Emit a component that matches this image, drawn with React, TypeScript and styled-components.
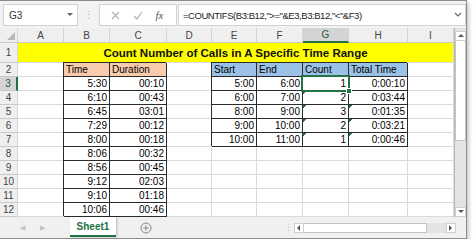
import React from "react";
import styled, { createGlobalStyle, css } from "styled-components";

const GlobalStyle = createGlobalStyle`
  html, body { margin: 0; padding: 0; background: #fff; }
  body { font-family: "Liberation Sans", Arial, sans-serif; color: #000; }
`;

const COLS = [18, 46, 46, 57, 45, 45, 46, 46, 59, 46];
const LETTERS = ["A", "B", "C", "D", "E", "F", "G", "H", "I"];
const GREEN = "#217346";
const LINE = "#dadada";
const DARK = "#2b2b2b";

const ROWS: string[][] = [
  ["", "Time", "Duration", "", "Start", "End", "Count", "Total Time", ""],
  ["", "5:30", "00:10", "", "5:00", "6:00", "1", "0:00:10", ""],
  ["", "6:10", "00:43", "", "6:00", "7:00", "2", "0:03:44", ""],
  ["", "6:45", "03:01", "", "8:00", "9:00", "3", "0:01:35", ""],
  ["", "7:29", "00:12", "", "9:00", "10:00", "2", "0:03:21", ""],
  ["", "8:00", "00:18", "", "10:00", "11:00", "1", "0:00:46", ""],
  ["", "8:06", "00:32", "", "", "", "", "", ""],
  ["", "8:56", "00:45", "", "", "", "", "", ""],
  ["", "9:12", "02:03", "", "", "", "", "", ""],
  ["", "9:10", "01:18", "", "", "", "", "", ""],
  ["", "10:06", "00:46", "", "", "", "", "", ""],
];

const Window = styled.div`
  width: 466px;
  border-top: 1px solid #8c8c8c;
  border-right: 1px solid #8c8c8c;
  border-bottom: 1px solid #8c8c8c;
  box-shadow: 2px 3px 4px rgba(0, 0, 0, 0.22);
  background: #f3f3f3;
  display: flex;
  flex-direction: column;
`;

/* ---------- formula bar ---------- */

const FormulaBar = styled.div`
  height: 27px;
  box-sizing: border-box;
  padding: 3px 0 2px 3px;
  display: flex;
  align-items: stretch;
  background: #f3f3f3;
`;

const Box = styled.div<{ $w?: number }>`
  box-sizing: border-box;
  background: #fff;
  border: 1px solid #d2d2d2;
  display: flex;
  align-items: center;
  ${(p) => (p.$w ? css`width: ${p.$w}px;` : css`flex: 1;`)}
`;

const NameText = styled.span`
  font-size: 10px;
  color: #333;
  padding-left: 5px;
  flex: 1;
`;

const Dots = styled.div`
  width: 21px;
  display: flex;
  align-items: center;
  justify-content: center;
  color: #b4b4b4;
  font-size: 11px;
`;

const FuncButtons = styled(Box)`
  justify-content: space-around;
  padding: 0 6px 0 4px;
  margin-right: 1px;
`;

const Fx = styled.span`
  font-family: "Liberation Serif", serif;
  font-style: italic;
  font-size: 11px;
  color: #555;
`;

const FormulaText = styled.span`
  flex: 1;
  font-size: 9.5px;
  letter-spacing: -0.45px;
  color: #222;
  padding-left: 4px;
  white-space: nowrap;
`;

/* ---------- sheet grid ---------- */

const Body = styled.div`
  display: flex;
`;

const Grid = styled.div`
  display: grid;
  grid-template-columns: ${COLS.map((c) => `${c}px`).join(" ")};
  grid-template-rows: 15px 20px repeat(11, 14px);
  background: #fff;
`;

const Head = styled.div<{ $sel?: boolean; $side?: boolean }>`
  box-sizing: border-box;
  background: ${(p) => (p.$sel ? "#d4d4d4" : "#efefef")};
  border-right: ${(p) => (p.$side && p.$sel ? `2px solid ${GREEN}` : "1px solid #d4d4d4")};
  border-bottom: ${(p) => (!p.$side && p.$sel ? `2px solid ${GREEN}` : "1px solid #c9c9c9")};
  font-size: 10px;
  color: ${(p) => (p.$sel ? "#1f5c38" : "#444")};
  display: flex;
  align-items: center;
  justify-content: center;
`;

const Corner = styled(Head)`
  align-items: flex-end;
  justify-content: flex-end;
  padding: 0 2px 2px 0;
`;

const Cell = styled.div<{
  $fill?: string;
  $align?: "left" | "right";
  $box?: boolean;
  $err?: boolean;
  $sel?: boolean;
}>`
  box-sizing: border-box;
  border-right: 1px solid ${(p) => (p.$box ? DARK : LINE)};
  border-bottom: 1px solid ${(p) => (p.$box ? DARK : LINE)};
  background: ${(p) =>
    p.$err
      ? `linear-gradient(135deg, ${GREEN} 50%, transparent 50%) 0 0 / 4px 4px no-repeat, ${p.$fill ?? "#fff"}`
      : p.$fill ?? "#fff"};
  ${(p) => p.$box && css`box-shadow: -1px -1px 0 ${DARK};`}
  font-size: 10px;
  line-height: 13px;
  text-align: ${(p) => p.$align ?? "right"};
  padding: 0 2px 0 2px;
  white-space: nowrap;
  overflow: visible;
  ${(p) =>
    p.$sel &&
    css`
      position: relative;
      &::after {
        content: "";
        position: absolute;
        left: -2px;
        top: -2px;
        right: -2px;
        bottom: -2px;
        border: 2px solid ${GREEN};
      }
      &::before {
        content: "";
        position: absolute;
        right: -4px;
        bottom: -4px;
        width: 4px;
        height: 4px;
        background: ${GREEN};
        border: 1px solid #fff;
        z-index: 2;
      }
    `}
`;

const Title = styled.div`
  grid-column: 2 / span 9;
  box-sizing: border-box;
  background: #ffff00;
  border-right: 1px solid ${LINE};
  border-bottom: 1px solid ${LINE};
  font-weight: bold;
  font-size: 11.5px;
  color: #111;
  display: flex;
  align-items: center;
  justify-content: center;
  padding-top: 1px;
`;

/* ---------- vertical scrollbar ---------- */

const VScroll = styled.div`
  width: 12px;
  box-sizing: border-box;
  border-left: 1px solid #b9b9b9;
  background: #e3e3e3;
  display: flex;
  flex-direction: column;
  padding-top: 3px;
`;

const ArrowBtn = styled.div<{ $w?: number }>`
  box-sizing: border-box;
  width: ${(p) => p.$w ?? 11}px;
  height: 10px;
  background: #fff;
  border: 1px solid #cfcfcf;
  display: flex;
  align-items: center;
  justify-content: center;
  flex-shrink: 0;
`;

const VThumb = styled.div`
  height: 100px;
  box-sizing: border-box;
  background: #fff;
  border: 1px solid #c4c4c4;
  border-top: none;
`;

const Spacer = styled.div`
  flex: 1;
`;

/* ---------- tab bar ---------- */

const TabBar = styled.div`
  height: 21px;
  box-sizing: border-box;
  background: #f0f0f0;
  display: flex;
  align-items: stretch;
`;

const Nav = styled.div`
  width: 20px;
  display: flex;
  align-items: center;
  justify-content: center;
  color: #c3c3c3;
  font-size: 7px;
`;

const SheetTab = styled.div`
  width: 46px;
  height: 20px;
  box-sizing: border-box;
  background: #fff;
  border-bottom: 2px solid ${GREEN};
  box-shadow: 1px 0 2px rgba(0, 0, 0, 0.25);
  color: ${GREEN};
  font-weight: bold;
  font-size: 10px;
  display: flex;
  align-items: center;
  justify-content: center;
`;

const PlusBtn = styled.div`
  width: 60px;
  display: flex;
  align-items: center;
  justify-content: center;
`;

const HScroll = styled.div`
  display: flex;
  align-items: center;
  gap: 0;
`;

const HTrack = styled.div<{ $w: number; $light?: boolean }>`
  width: ${(p) => p.$w}px;
  height: 10px;
  box-sizing: border-box;
  background: ${(p) => (p.$light ? "#fff" : "#e3e3e3")};
  border: ${(p) => (p.$light ? "1px solid #c4c4c4" : "none")};
  border-left: none;
`;

const Grip = styled.div`
  width: 12px;
  display: flex;
  align-items: center;
  justify-content: center;
  color: #bdbdbd;
  font-size: 9px;
`;

const Tri = ({ dir }: { dir: "up" | "down" | "left" | "right" }) => {
  const pts = {
    up: "0,4 3,1 6,4",
    down: "0,1 6,1 3,4",
    left: "4,0 4,6 1,3",
    right: "1,0 1,6 4,3",
  }[dir];
  return (
    <svg width="6" height="6" viewBox="0 0 6 6">
      <polygon points={pts} fill="#555" />
    </svg>
  );
};

export default function App() {
  return (
    <>
      <GlobalStyle />
      <Window>
        <FormulaBar>
          <Box $w={75}>
            <NameText>G3</NameText>
            <svg width="12" height="8" viewBox="0 0 12 8">
              <polygon points="2,2 8,2 5,5" fill="#666" />
            </svg>
          </Box>
          <Dots>⋮</Dots>
          <FuncButtons $w={78}>
            <svg width="9" height="9" viewBox="0 0 9 9">
              <path d="M1 1 L8 8 M8 1 L1 8" stroke="#b3b3b3" strokeWidth="1.2" />
            </svg>
            <svg width="10" height="9" viewBox="0 0 10 9">
              <path d="M1 5 L3.8 8 L9 1" stroke="#b3b3b3" strokeWidth="1.2" fill="none" />
            </svg>
            <Fx>fx</Fx>
          </FuncButtons>
          <Box>
            <FormulaText>=COUNTIFS(B3:B12,"&gt;="&amp;E3,B3:B12,"&lt;"&amp;F3)</FormulaText>
            <svg width="14" height="8" viewBox="0 0 14 8">
              <path d="M4 2 L7 5 L10 2" stroke="#666" strokeWidth="1.2" fill="none" />
            </svg>
          </Box>
        </FormulaBar>

        <Body>
          <Grid>
            <Corner>
              <svg width="8" height="8" viewBox="0 0 8 8">
                <polygon points="8,0 8,8 0,8" fill="#b9b9b9" />
              </svg>
            </Corner>
            {LETTERS.map((l) => (
              <Head key={l} $sel={l === "G"}>
                {l}
              </Head>
            ))}

            <Head $side>1</Head>
            <Title>Count Number of Calls in A Specific Time Range</Title>

            {ROWS.map((row, i) => {
              const r = i + 2;
              return (
                <React.Fragment key={r}>
                  <Head $side $sel={r === 3}>
                    {r}
                  </Head>
                  {row.map((v, c) => {
                    const inFirst = c === 1 || c === 2;
                    const inSecond = c >= 4 && c <= 7 && r <= 7;
                    const fill =
                      r === 2 && inFirst ? "#f8cbad" : r === 2 && inSecond ? "#9bc2e6" : undefined;
                    return (
                      <Cell
                        key={c}
                        $box={inFirst || inSecond}
                        $fill={fill}
                        $align={r === 2 ? "left" : "right"}
                        $err={r >= 4 && r <= 7 && (c === 6 || c === 7)}
                        $sel={r === 3 && c === 6}
                      >
                        {v}
                      </Cell>
                    );
                  })}
                </React.Fragment>
              );
            })}
          </Grid>

          <VScroll>
            <ArrowBtn>
              <Tri dir="up" />
            </ArrowBtn>
            <VThumb />
            <Spacer />
            <ArrowBtn>
              <Tri dir="down" />
            </ArrowBtn>
          </VScroll>
        </Body>

        <TabBar>
          <Nav style={{ marginLeft: 12 }}>◀</Nav>
          <Nav>▶</Nav>
          <SheetTab style={{ marginLeft: 18 }}>Sheet1</SheetTab>
          <PlusBtn>
            <svg width="12" height="12" viewBox="0 0 12 12">
              <circle cx="6" cy="6" r="5" stroke="#8a8a8a" strokeWidth="1" fill="none" />
              <path d="M6 3.3 V8.7 M3.3 6 H8.7" stroke="#8a8a8a" strokeWidth="1" />
            </svg>
          </PlusBtn>
          <Spacer />
          <Grip>⋮</Grip>
          <HScroll>
            <ArrowBtn $w={10}>
              <Tri dir="left" />
            </ArrowBtn>
            <HTrack $w={123} $light />
            <HTrack $w={19} />
            <ArrowBtn $w={10}>
              <Tri dir="right" />
            </ArrowBtn>
          </HScroll>
          <div style={{ width: 10 }} />
        </TabBar>
      </Window>
    </>
  );
}
